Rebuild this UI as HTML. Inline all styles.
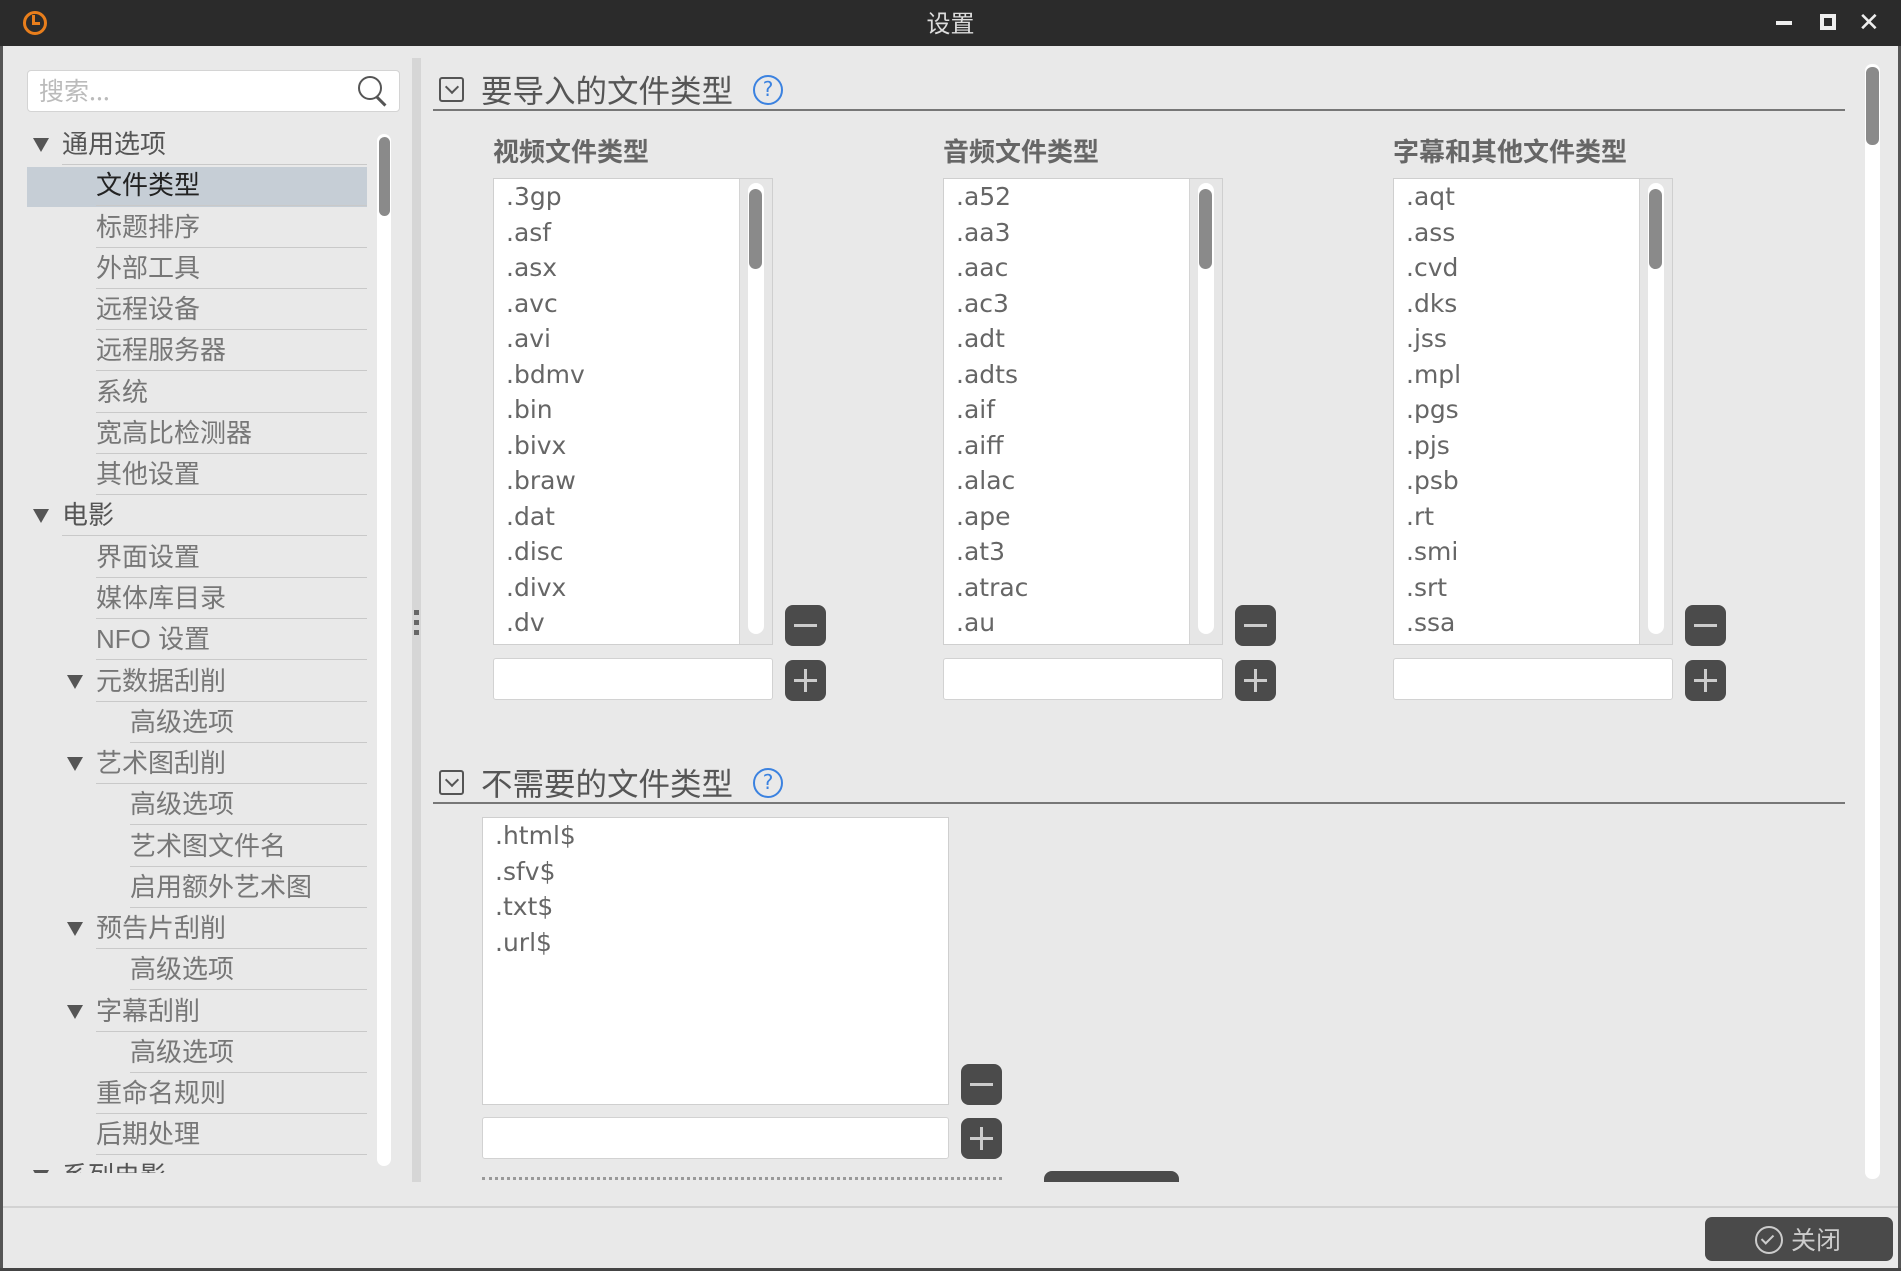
<!DOCTYPE html>
<html><head><meta charset="utf-8"><style>
*{margin:0;padding:0;box-sizing:border-box}
body{width:1901px;height:1271px;background:#e9e9e9;position:relative;overflow:hidden;font-family:"DejaVu Sans","Liberation Sans","Noto Sans CJK SC",sans-serif;color:#666}
.a{position:absolute}
.cjk{font-family:"Noto Sans CJK SC","WenQuanYi Zen Hei",sans-serif}
.tree div.r{position:absolute;height:41px;font-size:26px;line-height:40px;color:#777;font-family:"Liberation Sans","Noto Sans CJK SC",sans-serif;border-bottom:1px solid #c9c9c9;right:0}
.tri{position:absolute;width:0;height:0;border-left:8px solid transparent;border-right:8px solid transparent;border-top:14px solid #555}
.list{position:absolute;background:#fff;border:1px solid #cfcfcf;overflow:hidden}
.list div{height:35.5px;line-height:35.5px;font-size:25px;color:#666;padding-left:12px}
.sb{position:absolute;background:#e6e6e6;border-left:1px solid #d4d4d4}
.sb i{position:absolute;left:8px;width:16px;top:4px;bottom:10px;background:#fff;border-radius:8px}
.sb b{position:absolute;left:9px;width:13px;top:10px;height:80px;background:#8a8a8a;border-radius:7px}
.btn{position:absolute;width:41px;height:41px;background:#4b4b4b;border-radius:8px}
.btn::before{content:"";position:absolute;left:9px;top:19px;width:23px;height:3px;background:#ccc}
.btn.p::after{content:"";position:absolute;left:19px;top:9px;width:3px;height:23px;background:#ccc}
.inp{position:absolute;background:#fff;border:1px solid #d2d2d2;border-radius:3px;height:42px}
.hdr{position:absolute;font-size:31.5px;color:#555;font-family:"Noto Sans CJK SC",sans-serif;line-height:32px}
.chk{position:absolute;width:25px;height:25px;border:2px solid #555;border-radius:3px}
.chk::after{content:"";position:absolute;left:6px;top:3px;width:8px;height:8px;border-right:2px solid #555;border-bottom:2px solid #555;transform:rotate(45deg)}
.help{position:absolute;width:30px;height:30px;border:2.5px solid #3b82e0;border-radius:50%;color:#3b82e0;font-size:20px;line-height:25px;text-align:center;font-family:"DejaVu Sans",sans-serif}
.ch{position:absolute;font-size:26px;color:#666;font-family:"Noto Sans CJK SC",sans-serif;font-weight:bold}
</style></head><body>
<div class="a" style="left:0;top:0;width:1901px;height:46px;background:#2b2b2b"></div>
<div class="a" style="left:23px;top:11px;width:24px;height:24px;border:3px solid #e87e1c;border-radius:50%"></div>
<div class="a" style="left:32px;top:15px;width:8px;height:10px;border-left:3px solid #e87e1c;border-bottom:3px solid #e87e1c"></div>
<div class="a cjk" style="left:0;width:1901px;top:6px;text-align:center;color:#ddd;font-size:24px;line-height:32px">设置</div>
<div class="a" style="left:1776px;top:21px;width:16px;height:4px;background:#eee"></div>
<div class="a" style="left:1820px;top:14px;width:16px;height:16px;border:4px solid #eee"></div>
<div class="a" style="left:1858px;top:8px;color:#eee;font-size:26px;font-weight:bold;font-family:'DejaVu Sans'">✕</div>
<div class="a" style="left:0;top:46px;width:3px;height:1225px;background:#555"></div>
<div class="a" style="left:1898px;top:46px;width:3px;height:1225px;background:#555"></div>
<div class="a" style="left:0;top:1268px;width:1901px;height:3px;background:#444"></div>
<div class="a" style="left:27px;top:70px;width:373px;height:42px;background:#fff;border:1px solid #d4d4d4;border-radius:4px"></div>
<div class="a cjk" style="left:39px;top:73px;font-size:25px;color:#bbb;line-height:34px">搜索...</div>
<div class="a" style="left:358px;top:76px;width:24px;height:24px;border:2.5px solid #555;border-radius:50%"></div>
<div class="a" style="left:378px;top:96px;width:12px;height:3px;background:#555;transform:rotate(45deg);transform-origin:0 0"></div>
<div class="a" style="left:27px;top:167px;width:340px;height:40px;background:#c6ced6"></div>
<div class="a tree" style="left:0;top:0;width:367px;height:1173px;overflow:hidden">
<div class="tri" style="left:33px;top:138px"></div><div class="r" style="left:62px;top:124px;color:#555">通用选项</div>
<div class="r" style="left:96px;top:165px;color:#222">文件类型</div>
<div class="r" style="left:96px;top:207px">标题排序</div>
<div class="r" style="left:96px;top:248px">外部工具</div>
<div class="r" style="left:96px;top:289px">远程设备</div>
<div class="r" style="left:96px;top:330px">远程服务器</div>
<div class="r" style="left:96px;top:372px">系统</div>
<div class="r" style="left:96px;top:413px">宽高比检测器</div>
<div class="r" style="left:96px;top:454px">其他设置</div>
<div class="tri" style="left:33px;top:509px"></div><div class="r" style="left:62px;top:495px;color:#555">电影</div>
<div class="r" style="left:96px;top:537px">界面设置</div>
<div class="r" style="left:96px;top:578px">媒体库目录</div>
<div class="r" style="left:96px;top:619px">NFO 设置</div>
<div class="tri" style="left:67px;top:675px"></div><div class="r" style="left:96px;top:661px">元数据刮削</div>
<div class="r" style="left:130px;top:702px">高级选项</div>
<div class="tri" style="left:67px;top:757px"></div><div class="r" style="left:96px;top:743px">艺术图刮削</div>
<div class="r" style="left:130px;top:784px">高级选项</div>
<div class="r" style="left:130px;top:826px">艺术图文件名</div>
<div class="r" style="left:130px;top:867px">启用额外艺术图</div>
<div class="tri" style="left:67px;top:922px"></div><div class="r" style="left:96px;top:908px">预告片刮削</div>
<div class="r" style="left:130px;top:949px">高级选项</div>
<div class="tri" style="left:67px;top:1005px"></div><div class="r" style="left:96px;top:991px">字幕刮削</div>
<div class="r" style="left:130px;top:1032px">高级选项</div>
<div class="r" style="left:96px;top:1073px">重命名规则</div>
<div class="r" style="left:96px;top:1114px">后期处理</div>
<div class="tri" style="left:33px;top:1170px"></div><div class="r" style="left:62px;top:1156px;color:#555">系列电影</div>
</div>
<div class="a" style="left:377px;top:134px;width:14px;height:1032px;background:#fff;border-radius:7px"></div>
<div class="a" style="left:379px;top:137px;width:11px;height:79px;background:#8a8a8a;border-radius:6px"></div>
<div class="a" style="left:412px;top:58px;width:9px;height:1124px;background:#d6d6d6"></div>
<div class="a" style="left:414px;top:610px;width:5px;height:5px;background:#666"></div>
<div class="a" style="left:414px;top:620px;width:5px;height:5px;background:#666"></div>
<div class="a" style="left:414px;top:630px;width:5px;height:5px;background:#666"></div>
<div class="chk" style="left:439px;top:77px"></div>
<div class="hdr" style="left:481px;top:73px">要导入的文件类型</div>
<div class="help" style="left:753px;top:75px">?</div>
<div class="a" style="left:433px;top:109px;width:1412px;height:2px;background:#777"></div>
<div class="ch" style="left:493px;top:132px">视频文件类型</div>
<div class="ch" style="left:943px;top:132px">音频文件类型</div>
<div class="ch" style="left:1393px;top:132px">字幕和其他文件类型</div>
<div class="list" style="left:493px;top:178px;width:280px;height:467px"><div>.3gp</div><div>.asf</div><div>.asx</div><div>.avc</div><div>.avi</div><div>.bdmv</div><div>.bin</div><div>.bivx</div><div>.braw</div><div>.dat</div><div>.disc</div><div>.divx</div><div>.dv</div></div>
<div class="sb" style="left:739px;top:179px;width:33px;height:465px"><i></i><b></b></div>
<div class="btn" style="left:785px;top:605px"></div><div class="btn p" style="left:785px;top:660px"></div>
<div class="inp" style="left:493px;top:658px;width:280px"></div>
<div class="list" style="left:943px;top:178px;width:280px;height:467px"><div>.a52</div><div>.aa3</div><div>.aac</div><div>.ac3</div><div>.adt</div><div>.adts</div><div>.aif</div><div>.aiff</div><div>.alac</div><div>.ape</div><div>.at3</div><div>.atrac</div><div>.au</div></div>
<div class="sb" style="left:1189px;top:179px;width:33px;height:465px"><i></i><b></b></div>
<div class="btn" style="left:1235px;top:605px"></div><div class="btn p" style="left:1235px;top:660px"></div>
<div class="inp" style="left:943px;top:658px;width:280px"></div>
<div class="list" style="left:1393px;top:178px;width:280px;height:467px"><div>.aqt</div><div>.ass</div><div>.cvd</div><div>.dks</div><div>.jss</div><div>.mpl</div><div>.pgs</div><div>.pjs</div><div>.psb</div><div>.rt</div><div>.smi</div><div>.srt</div><div>.ssa</div></div>
<div class="sb" style="left:1639px;top:179px;width:33px;height:465px"><i></i><b></b></div>
<div class="btn" style="left:1685px;top:605px"></div><div class="btn p" style="left:1685px;top:660px"></div>
<div class="inp" style="left:1393px;top:658px;width:280px"></div>
<div class="chk" style="left:439px;top:770px"></div>
<div class="hdr" style="left:481px;top:766px">不需要的文件类型</div>
<div class="help" style="left:753px;top:768px">?</div>
<div class="a" style="left:433px;top:802px;width:1412px;height:2px;background:#777"></div>
<div class="list" style="left:482px;top:817px;width:467px;height:288px"><div>.html$</div><div>.sfv$</div><div>.txt$</div><div>.url$</div></div>
<div class="btn" style="left:961px;top:1064px"></div><div class="btn p" style="left:961px;top:1118px"></div>
<div class="inp" style="left:482px;top:1117px;width:467px"></div>
<div class="a" style="left:1044px;top:1171px;width:135px;height:11px;background:#4b4b4b;border-radius:8px 8px 0 0"></div>
<div class="a" style="left:482px;top:1177px;width:520px;height:3px;border-top:3px dotted #999"></div>
<div class="a" style="left:1865px;top:64px;width:15px;height:1115px;background:#fff;border-radius:7px"></div>
<div class="a" style="left:1866px;top:67px;width:13px;height:78px;background:#8a8a8a;border-radius:6px"></div>
<div class="a" style="left:3px;top:1206px;width:1895px;height:2px;background:#d2d2d2"></div>
<div class="a" style="left:1705px;top:1217px;width:188px;height:44px;background:#4a4a4a;border-radius:7px"></div>
<div class="a" style="left:1755px;top:1226px;width:28px;height:28px;border:2.5px solid #ccc;border-radius:50%"></div>
<div class="a" style="left:1764px;top:1232px;width:7px;height:12px;border-right:2.5px solid #ccc;border-bottom:2.5px solid #ccc;transform:rotate(45deg)"></div>
<div class="a cjk" style="left:1791px;top:1222px;font-size:25px;color:#ccc;line-height:34px">关闭</div>
</body></html>
